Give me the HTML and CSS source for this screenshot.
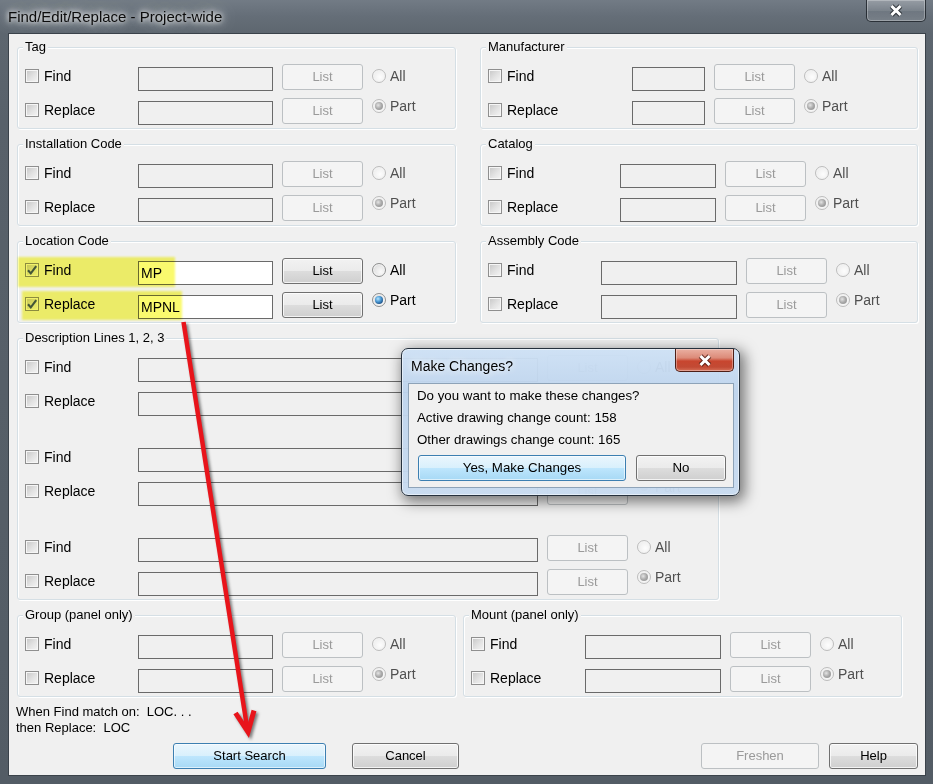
FILE: index.html
```html
<!DOCTYPE html>
<html>
<head>
<meta charset="utf-8">
<link rel="stylesheet" href="styles.css">
</head>
<body>
<div class="window">
  <div class="titlebar">
    <span class="title">Find/Edit/Replace - Project-wide</span>
    <div class="close gray">
      <svg width="16" height="13" viewBox="0 0 16 13"><path d="M3.5 2 L12.5 11 M12.5 2 L3.5 11" stroke="rgba(20,24,28,.7)" stroke-width="5"/><path d="M3.5 2 L12.5 11 M12.5 2 L3.5 11" stroke="#fff" stroke-width="3"/></svg>
    </div>
  </div>
  <div class="client">
    <div class="grid">
      <div class="group g-tag">
        <div class="legend">Tag</div>
        <div class="rows">
          <div class="row r1"><div class="chk"><span class="cb"></span>Find</div><div class="tb"></div><div class="btn list dis">List</div><div class="opt dis"><span class="rb"></span>All</div></div>
          <div class="row r2"><div class="chk"><span class="cb"></span>Replace</div><div class="tb"></div><div class="btn list dis">List</div><div class="opt dis"><span class="rb"><span class="dot"></span></span>Part</div></div>
        </div>
      </div>
      <div class="group g-manuf">
        <div class="legend">Manufacturer</div>
        <div class="rows">
          <div class="row r1"><div class="chk"><span class="cb"></span>Find</div><div class="tb"></div><div class="btn list dis">List</div><div class="opt dis"><span class="rb"></span>All</div></div>
          <div class="row r2"><div class="chk"><span class="cb"></span>Replace</div><div class="tb"></div><div class="btn list dis">List</div><div class="opt dis"><span class="rb"><span class="dot"></span></span>Part</div></div>
        </div>
      </div>
      <div class="group g-inst">
        <div class="legend">Installation Code</div>
        <div class="rows">
          <div class="row r1"><div class="chk"><span class="cb"></span>Find</div><div class="tb"></div><div class="btn list dis">List</div><div class="opt dis"><span class="rb"></span>All</div></div>
          <div class="row r2"><div class="chk"><span class="cb"></span>Replace</div><div class="tb"></div><div class="btn list dis">List</div><div class="opt dis"><span class="rb"><span class="dot"></span></span>Part</div></div>
        </div>
      </div>
      <div class="group g-cat">
        <div class="legend">Catalog</div>
        <div class="rows">
          <div class="row r1"><div class="chk"><span class="cb"></span>Find</div><div class="tb"></div><div class="btn list dis">List</div><div class="opt dis"><span class="rb"></span>All</div></div>
          <div class="row r2"><div class="chk"><span class="cb"></span>Replace</div><div class="tb"></div><div class="btn list dis">List</div><div class="opt dis"><span class="rb"><span class="dot"></span></span>Part</div></div>
        </div>
      </div>
      <div class="group g-loc">
        <div class="legend">Location Code</div>
        <div class="rows">
          <div class="row r1"><div class="chk"><span class="cb"><svg width="12" height="12" viewBox="0 0 12 12"><path d="M2 6.2 L4.8 9.4 L10.2 2.2" fill="none" stroke="#44587e" stroke-width="2.1"/></svg></span>Find</div><div class="tb on">MP</div><div class="btn list">List</div><div class="opt"><span class="rb"></span>All</div></div>
          <div class="row r2"><div class="chk"><span class="cb"><svg width="12" height="12" viewBox="0 0 12 12"><path d="M2 6.2 L4.8 9.4 L10.2 2.2" fill="none" stroke="#44587e" stroke-width="2.1"/></svg></span>Replace</div><div class="tb on">MPNL</div><div class="btn list">List</div><div class="opt"><span class="rb"><span class="dot blue"></span></span>Part</div></div>
        </div>
        <div class="hl hl1"></div>
        <div class="hl hl2"></div>
      </div>
      <div class="group g-asm">
        <div class="legend">Assembly Code</div>
        <div class="rows">
          <div class="row r1"><div class="chk"><span class="cb"></span>Find</div><div class="tb"></div><div class="btn list dis">List</div><div class="opt dis"><span class="rb"></span>All</div></div>
          <div class="row r2"><div class="chk"><span class="cb"></span>Replace</div><div class="tb"></div><div class="btn list dis">List</div><div class="opt dis"><span class="rb"><span class="dot"></span></span>Part</div></div>
        </div>
      </div>
    </div>

    <div class="group g-desc">
      <div class="legend">Description Lines 1, 2, 3</div>
      <div class="pairs">
        <div class="rows">
          <div class="row r1"><div class="chk"><span class="cb"></span>Find</div><div class="tb"></div><div class="btn list dis">List</div><div class="opt dis"><span class="rb"></span>All</div></div>
          <div class="row r2"><div class="chk"><span class="cb"></span>Replace</div><div class="tb"></div><div class="btn list dis">List</div><div class="opt dis"><span class="rb"><span class="dot"></span></span>Part</div></div>
        </div>
        <div class="rows">
          <div class="row r1"><div class="chk"><span class="cb"></span>Find</div><div class="tb"></div><div class="btn list dis">List</div><div class="opt dis"><span class="rb"></span>All</div></div>
          <div class="row r2"><div class="chk"><span class="cb"></span>Replace</div><div class="tb"></div><div class="btn list dis">List</div><div class="opt dis"><span class="rb"><span class="dot"></span></span>Part</div></div>
        </div>
        <div class="rows">
          <div class="row r1"><div class="chk"><span class="cb"></span>Find</div><div class="tb"></div><div class="btn list dis">List</div><div class="opt dis"><span class="rb"></span>All</div></div>
          <div class="row r2"><div class="chk"><span class="cb"></span>Replace</div><div class="tb"></div><div class="btn list dis">List</div><div class="opt dis"><span class="rb"><span class="dot"></span></span>Part</div></div>
        </div>
      </div>
    </div>

    <div class="bottomrow">
      <div class="group g-grp">
        <div class="legend">Group (panel only)</div>
        <div class="rows">
          <div class="row r1"><div class="chk"><span class="cb"></span>Find</div><div class="tb"></div><div class="btn list dis">List</div><div class="opt dis"><span class="rb"></span>All</div></div>
          <div class="row r2"><div class="chk"><span class="cb"></span>Replace</div><div class="tb"></div><div class="btn list dis">List</div><div class="opt dis"><span class="rb"><span class="dot"></span></span>Part</div></div>
        </div>
      </div>
      <div class="group g-mount">
        <div class="legend">Mount (panel only)</div>
        <div class="rows">
          <div class="row r1"><div class="chk"><span class="cb"></span>Find</div><div class="tb"></div><div class="btn list dis">List</div><div class="opt dis"><span class="rb"></span>All</div></div>
          <div class="row r2"><div class="chk"><span class="cb"></span>Replace</div><div class="tb"></div><div class="btn list dis">List</div><div class="opt dis"><span class="rb"><span class="dot"></span></span>Part</div></div>
        </div>
      </div>
    </div>

    <div class="info">When Find match on:  LOC. . .
then Replace:  LOC</div>

    <div class="buttons">
      <div class="btn def b-start">Start Search</div>
      <div class="btn b-cancel">Cancel</div>
      <div class="btn dis b-freshen">Freshen</div>
      <div class="btn b-help">Help</div>
    </div>
  </div>

  <svg class="arrow" width="933" height="784" viewBox="0 0 933 784">
    <line x1="183.5" y1="322" x2="247" y2="727" stroke="#e8141b" stroke-width="4.5"/>
    <polyline points="235.5,713 248,732 254,710.5" fill="none" stroke="#e8141b" stroke-width="5" stroke-linejoin="miter"/>
  </svg>

  <div class="msg">
    <div class="msg-title">
      <span class="msg-caption">Make Changes?</span>
      <div class="close red">
        <svg width="16" height="13" viewBox="0 0 16 13"><path d="M3.5 2 L12.5 11 M12.5 2 L3.5 11" stroke="rgba(70,20,12,.75)" stroke-width="5"/><path d="M3.5 2 L12.5 11 M12.5 2 L3.5 11" stroke="#fff" stroke-width="3"/></svg>
      </div>
    </div>
    <div class="msg-client">
      <p>Do you want to make these changes?</p>
      <p>Active drawing change count: 158</p>
      <p>Other drawings change count: 165</p>
      <div class="msg-btns">
        <div class="btn def b-yes">Yes, Make Changes</div>
        <div class="btn b-no">No</div>
      </div>
    </div>
  </div>
</div>
</body>
</html>
```

FILE: styles.css
```css
body {
  margin: 0;
  font-family: "Liberation Sans", Arial, sans-serif;
  color: #000;
}

.window {
  position: relative;
  width: 933px;
  height: 784px;
  box-sizing: border-box;
  padding: 0 7px 8px 8px;
  display: flex;
  flex-direction: column;
  overflow: hidden;
  background: linear-gradient(180deg, #727b85 0, #656e78 16px, #5d666f 34px, #58616a 120px, #535c65 100%);
}

.titlebar {
  height: 33px;
  flex: none;
  display: flex;
  align-items: center;
}

.title {
  font-size: 15px;
  color: #0c0c0c;
  text-shadow: 0 0 5px #fff, 0 0 9px rgba(255,255,255,.9), 0 0 16px rgba(255,255,255,.7);
}

.close {
  margin-left: auto;
  align-self: flex-start;
  width: 60px;
  height: 22px;
  box-sizing: border-box;
  display: flex;
  align-items: center;
  justify-content: center;
  border-radius: 0 0 5px 5px;
}

.close.gray {
  border: 1px solid rgba(28,34,40,.85);
  border-top: none;
  background: linear-gradient(180deg, rgba(255,255,255,.26), rgba(255,255,255,.12) 50%, rgba(255,255,255,.04) 52%, rgba(255,255,255,.14));
  box-shadow: inset 0 0 0 1px rgba(255,255,255,.28);
}

.close.red {
  width: 59px;
  height: 23px;
  border: 1px solid #4e1e16;
  border-top: none;
  background: linear-gradient(180deg, #eab0a2 0%, #dc8b79 40%, #c8462f 55%, #c24a34 82%, #d67058 100%);
  box-shadow: inset 0 0 0 1px rgba(255,255,255,.35);
}

.client {
  flex: 1;
  border: 1px solid #3a424a;
  background: #f0f0f0;
  padding: 13px 7px 0 8px;
}

.grid {
  display: grid;
  grid-template-columns: 439px 438px;
  column-gap: 24px;
  row-gap: 15px;
}

.group {
  position: relative;
  border: 1px solid #d5dfe5;
  border-radius: 3px;
  box-shadow: inset 1px 1px 0 #fff, 1px 1px 0 #fff;
  padding-bottom: 3px;
}

.legend {
  width: fit-content;
  margin: -9px 0 0 5px;
  padding: 0 2px;
  background: #f0f0f0;
  font-size: 13px;
  line-height: 16px;
}

.rows {
  margin-top: 12px;
  display: flex;
  flex-direction: column;
  gap: 10px;
}

.pairs {
  display: flex;
  flex-direction: column;
  gap: 32px;
}

.pairs .rows + .rows {
  margin-top: 0;
}

.row {
  display: flex;
  align-items: flex-start;
  height: 24px;
}

.g-tag, .g-inst, .g-loc, .g-desc, .g-grp { --lw: 120px; --tw: 135px; }
.g-manuf { --lw: 151px; --tw: 73px; }
.g-cat { --lw: 139px; --tw: 96px; }
.g-asm { --lw: 120px; --tw: 136px; }
.g-mount { --lw: 121px; --tw: 136px; }
.g-desc { --tw: 400px; }

.chk {
  width: var(--lw);
  box-sizing: border-box;
  padding-left: 7px;
  height: 18px;
  display: flex;
  align-items: center;
  gap: 5px;
  font-size: 14px;
  flex: none;
}

.cb {
  width: 14px;
  height: 14px;
  box-sizing: border-box;
  border: 1px solid #8f8f8f;
  background: linear-gradient(135deg, #c6c6c6 0%, #e3e3e3 55%, #f5f5f5 100%);
  box-shadow: inset 0 0 0 1px #f6f6f6;
  display: flex;
  align-items: center;
  justify-content: center;
  flex: none;
}

.tb {
  width: var(--tw);
  height: 24px;
  box-sizing: border-box;
  border: 1px solid #6a6a6a;
  background: #f0f0f0;
  flex: none;
  font-size: 14px;
  line-height: 22px;
  padding-left: 2px;
}

.tb.on {
  background: #fff;
}

.btn {
  box-sizing: border-box;
  height: 26px;
  border: 1px solid #707070;
  border-radius: 3px;
  background: linear-gradient(180deg, #f2f2f2 0%, #ebebeb 48%, #dddddd 50%, #cfcfcf 100%);
  box-shadow: inset 0 0 0 1px rgba(255,255,255,.75);
  font-size: 13px;
  line-height: 24px;
  text-align: center;
  flex: none;
}

.btn.dis {
  border-color: #bcc0c3;
  background: #f4f4f4;
  box-shadow: none;
  color: #9a9a9a;
}

.btn.def {
  border-color: #3c7fb1;
  background: linear-gradient(180deg, #eaf6fd 0%, #d9f0fc 48%, #bee6fd 50%, #a7d9f5 100%);
  box-shadow: inset 0 0 0 1px rgba(255,255,255,.6);
}

.list {
  margin-left: 9px;
  margin-top: -3px;
  width: 81px;
}

.opt {
  margin-left: 9px;
  height: 16px;
  display: flex;
  align-items: center;
  gap: 4px;
  font-size: 14px;
  flex: none;
}

.opt.dis {
  color: #505050;
}

.r1 .opt { margin-top: 1px; }
.r2 .opt { margin-top: -3px; }

.rb {
  width: 14px;
  height: 14px;
  box-sizing: border-box;
  border-radius: 50%;
  border: 1px solid #8e8f8f;
  background: radial-gradient(circle at 65% 65%, #fafafa 0%, #e6e6e6 55%, #cfcfcf 100%);
  box-shadow: inset 0 0 0 1px #f4f4f4;
  display: flex;
  align-items: center;
  justify-content: center;
  flex: none;
}

.opt.dis .rb {
  border-color: #bdbdbd;
  background: radial-gradient(circle at 60% 60%, #fdfdfd 0%, #f0f0f0 60%, #e2e2e2 100%);
}

.dot {
  width: 8px;
  height: 8px;
  border-radius: 50%;
  background: radial-gradient(circle at 40% 40%, #e4e4e4 0%, #a9a9a9 50%, #8c8c8c 100%);
}

.dot.blue {
  background: radial-gradient(circle at 38% 35%, #b6e6ff 0%, #4d9ad4 40%, #17497f 80%, #0e3563 100%);
}

.hl {
  position: absolute;
  background: #fafa6e;
  mix-blend-mode: multiply;
  filter: blur(1.2px);
  z-index: 1;
}

.hl1 { left: 0; top: 15px; width: 157px; height: 30px; }
.hl2 { left: 4px; top: 49px; width: 160px; height: 29px; }

.g-desc {
  width: 702px;
  box-sizing: border-box;
  margin-top: 15px;
}

.bottomrow {
  display: flex;
  margin-top: 15px;
}

.g-grp { width: 439px; box-sizing: border-box; }
.g-mount { width: 439px; box-sizing: border-box; margin-left: 7px; }

.info {
  margin: 7px 0 0 -1px;
  font-size: 13px;
  line-height: 16px;
  white-space: pre;
}

.buttons {
  display: flex;
  margin-top: 7px;
}

.b-start { margin-left: 156px; width: 153px; }
.b-cancel { margin-left: 26px; width: 107px; }
.b-freshen { margin-left: auto; width: 118px; }
.b-help { margin-left: 10px; width: 89px; }

.arrow {
  position: absolute;
  left: 0;
  top: 0;
  pointer-events: none;
  z-index: 2;
  filter: drop-shadow(2px 2px 1.5px rgba(0,0,0,.5));
}

.msg {
  position: absolute;
  left: 401px;
  top: 348px;
  width: 339px;
  box-sizing: border-box;
  padding: 0 5px 7px 6px;
  border: 1px solid #26313d;
  border-radius: 7px;
  background: linear-gradient(180deg, rgba(206,225,245,.96) 0%, rgba(190,212,237,.96) 30%, rgba(200,219,240,.96) 100%);
  box-shadow: 3px 4px 14px 2px rgba(0,0,0,.5), inset 0 0 0 1px rgba(255,255,255,.5);
  z-index: 3;
}

.msg-title {
  height: 34px;
  display: flex;
  align-items: center;
}

.msg-caption {
  margin-left: 3px;
  font-size: 14px;
  text-shadow: 0 0 6px #fff, 0 0 12px rgba(255,255,255,.7);
}

.msg-client {
  border: 1px solid #8ea3b8;
  background: #f0f0f0;
  padding: 1px 7px 6px 8px;
  font-size: 13.3px;
}

.msg-client p {
  margin: 0;
  line-height: 22px;
}

.msg-btns {
  display: flex;
  margin: 4px 0 0 1px;
}

.b-yes { width: 208px; font-size: 13.3px; }
.b-no { width: 90px; margin-left: 10px; font-size: 13.3px; }
```
